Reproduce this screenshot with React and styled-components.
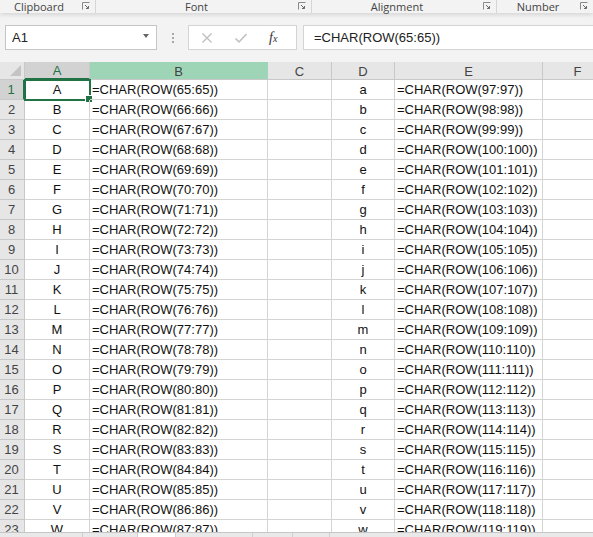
import React from "react";
import styled, { createGlobalStyle } from "styled-components";

const Global = createGlobalStyle`
  html, body { margin: 0; padding: 0; background: #ffffff; overflow: hidden; }
  * { box-sizing: border-box; }
`;

const Page = styled.div`
  width: 593px;
  height: 537px;
  display: flex;
  flex-direction: column;
  background: #f3f3f3;
  overflow: hidden;
  font-family: "Liberation Sans", Arial, sans-serif;
`;

const Ribbon = styled.div`
  height: 13px;
  display: grid;
  grid-template-columns: 96px 216px 185px 96px;
  background: #f3f3f3;
  box-shadow: 0 2px 4px rgba(0, 0, 0, 0.12);
  position: relative;
  z-index: 1;
  font-family: "Open Sans", "Noto Sans", sans-serif;
  font-size: 11px;
  color: #444;
`;

const Group = styled.div`
  position: relative;
  display: flex;
  align-items: center;
  justify-content: ${(p) => (p.$left ? "flex-start" : "center")};
  padding-left: ${(p) => (p.$left ? "14px" : "0")};
  padding-right: 14px;
  border-right: ${(p) => (p.$noSep ? "none" : "1px solid #d6d6d6")};
  line-height: 13px;
  margin-top: -1px;
  height: 14px;
`;

const Launcher = styled.svg`
  position: absolute;
  right: 5px;
  top: 3px;
`;

const LauncherIcon = () => (
  <Launcher width="8" height="8" viewBox="0 0 8 8">
    <path d="M0.5 7.5V0.5H7.5" fill="none" stroke="#8a8a8a" strokeWidth="1" />
    <path d="M3 3L6.5 6.5M4 6.5H6.5V4" fill="none" stroke="#6a6a6a" strokeWidth="1" />
  </Launcher>
);

const FormulaBar = styled.div`
  height: 49px;
  display: flex;
  align-items: flex-start;
  padding: 12px 0 0 5px;
  background: #f3f3f3;
`;

const NameBox = styled.div`
  width: 152px;
  height: 25px;
  background: #fff;
  border: 1px solid #c6c6c6;
  display: flex;
  align-items: center;
  justify-content: space-between;
  padding: 0 7px 0 6px;
  font-size: 13px;
  color: #222;
`;

const Caret = styled.span`
  width: 0;
  height: 0;
  border-left: 3.5px solid transparent;
  border-right: 3.5px solid transparent;
  border-top: 4px solid #666;
  margin-top: -3px;
`;

const Dots = styled.div`
  width: 31px;
  height: 25px;
  display: flex;
  flex-direction: column;
  align-items: center;
  justify-content: center;
  gap: 2px;
  & > span {
    width: 2px;
    height: 2px;
    background: #a8a8a8;
  }
`;

const FxBox = styled.div`
  width: 109px;
  height: 25px;
  background: #fff;
  border: 1px solid #d4d4d4;
  display: flex;
  align-items: center;
  gap: 21px;
  padding: 0 0 0 12px;
`;

const Fx = styled.span`
  font-family: "Liberation Serif", "Times New Roman", serif;
  font-style: italic;
  font-size: 14px;
  color: #333;
  & > sub {
    font-size: 10px;
    vertical-align: 0;
  }
`;

const FormulaInput = styled.div`
  flex: 1;
  height: 25px;
  margin-left: 6px;
  background: #fff;
  border: 1px solid #d4d4d4;
  border-right: none;
  display: flex;
  align-items: center;
  padding-left: 10px;
  font-size: 13px;
  color: #222;
`;

const Sheet = styled.div`
  flex: 1;
  display: grid;
  grid-template-columns: 25px 65px 178px 64px 63px 148px 70px;
  grid-template-rows: 18px repeat(23, 20px);
  background: #fff;
  overflow: hidden;
  align-content: start;
`;

const Corner = styled.div`
  background: #e6e6e6;
  border-right: 1px solid #c8c8c8;
  border-bottom: 1px solid #c8c8c8;
  position: relative;
  &::after {
    content: "";
    position: absolute;
    right: 3px;
    bottom: 3px;
    width: 0;
    height: 0;
    border-left: 11px solid transparent;
    border-bottom: 11px solid #c4c4c4;
  }
`;

const ColHead = styled.div`
  background: ${(p) => (p.$green ? "#9fd5b7" : p.$sel ? "#d2d2d2" : "#e6e6e6")};
  border-right: 1px solid ${(p) => (p.$green ? "#9fd5b7" : "#c8c8c8")};
  border-bottom: ${(p) => (p.$sel ? "2px solid #217346" : "1px solid #c8c8c8")};
  color: ${(p) => (p.$sel ? "#217346" : "#444")};
  font-size: 13px;
  display: flex;
  align-items: center;
  justify-content: center;
  padding-top: 1px;
`;

const RowHead = styled.div`
  background: ${(p) => (p.$sel ? "#d2d2d2" : "#e6e6e6")};
  border-right: ${(p) => (p.$sel ? "2px solid #217346" : "1px solid #c8c8c8")};
  border-bottom: 1px solid #c8c8c8;
  color: ${(p) => (p.$sel ? "#217346" : "#444")};
  font-size: 13px;
  display: flex;
  align-items: center;
  justify-content: center;
  padding-right: 1px;
`;

const Cell = styled.div`
  position: relative;
  border-right: 1px solid #d4d4d4;
  border-bottom: 1px solid #d4d4d4;
  font-size: 13px;
  color: #111;
  display: flex;
  align-items: center;
  justify-content: ${(p) => (p.$center ? "center" : "flex-start")};
  padding-left: ${(p) => (p.$center ? "0" : "2px")};
  white-space: nowrap;
  ${(p) =>
    p.$active &&
    `
    &::before {
      content: "";
      position: absolute;
      left: -1px; top: -1px; right: -2px; bottom: -2px;
      border: 2px solid #217346;
      pointer-events: none;
    }
    &::after {
      content: "";
      position: absolute;
      right: -4px; bottom: -4px;
      width: 6px; height: 6px;
      background: #217346;
      border: 1px solid #fff;
    }
  `}
`;

const TabBar = styled.div`
  height: 5px;
  background: #e9e9e9;
  border-top: 1px solid #c6c6c6;
  display: flex;
`;

const Tab = styled.div`
  width: ${(p) => p.$w}px;
  border-right: 1px solid #cfcfcf;
  background: ${(p) => (p.$active ? "#fff" : "transparent")};
`;

const upper = Array.from({ length: 23 }, (_, i) => i + 65);

export default function App() {
  return (
    <Page>
      <Global />
      <Ribbon>
        <Group $left>
          Clipboard
          <LauncherIcon />
        </Group>
        <Group>
          Font
          <LauncherIcon />
        </Group>
        <Group>
          Alignment
          <LauncherIcon />
        </Group>
        <Group $noSep>
          Number
          <LauncherIcon />
        </Group>
      </Ribbon>
      <FormulaBar>
        <NameBox>
          A1
          <Caret />
        </NameBox>
        <Dots>
          <span />
          <span />
          <span />
        </Dots>
        <FxBox>
          <svg width="12" height="12" viewBox="0 0 12 12">
            <path d="M1.5 1.5L10.5 10.5M10.5 1.5L1.5 10.5" stroke="#bdbdbd" strokeWidth="1.3" fill="none" />
          </svg>
          <svg width="14" height="12" viewBox="0 0 14 12">
            <path d="M1.5 6.5L5 10L12.5 2" stroke="#bdbdbd" strokeWidth="1.5" fill="none" />
          </svg>
          <Fx>
            f<sub>x</sub>
          </Fx>
        </FxBox>
        <FormulaInput>=CHAR(ROW(65:65))</FormulaInput>
      </FormulaBar>
      <Sheet>
        <Corner />
        <ColHead $sel>A</ColHead>
        <ColHead $green>B</ColHead>
        <ColHead>C</ColHead>
        <ColHead>D</ColHead>
        <ColHead>E</ColHead>
        <ColHead>F</ColHead>
        {upper.map((code, i) => {
          const lower = code + 32;
          return (
            <React.Fragment key={code}>
              <RowHead $sel={i === 0}>{i + 1}</RowHead>
              <Cell $center $active={i === 0}>
                {String.fromCharCode(code)}
              </Cell>
              <Cell>{`=CHAR(ROW(${code}:${code}))`}</Cell>
              <Cell />
              <Cell $center>{String.fromCharCode(lower)}</Cell>
              <Cell>{`=CHAR(ROW(${lower}:${lower}))`}</Cell>
              <Cell />
            </React.Fragment>
          );
        })}
      </Sheet>
      <TabBar>
        <Tab $w={83} />
        <Tab $w={55} />
        <Tab $w={38} $active />
        <Tab $w={77} />
        <Tab $w={40} />
        <Tab $w={37} />
      </TabBar>
    </Page>
  );
}
